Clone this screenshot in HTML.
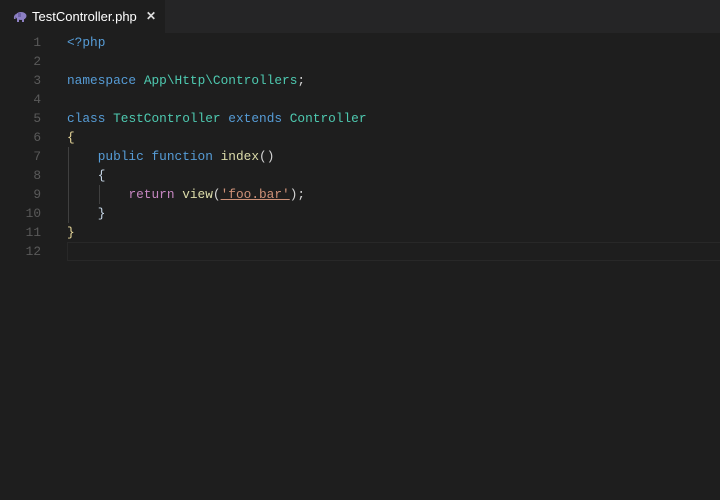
<!DOCTYPE html>
<html><head><meta charset="utf-8"><style>
html,body{margin:0;padding:0;width:720px;height:500px;background:#1e1e1e;overflow:hidden}
.tabbar{position:absolute;left:0;top:0;width:720px;height:33px;background:#252526}
.tab{position:absolute;left:0;top:0;width:165px;height:33px;background:#1e1e1e;font-family:"Liberation Sans",sans-serif;font-size:13px;color:#fff;letter-spacing:0}
.tab .name{position:absolute;left:32px;top:9px}
.tab .x{position:absolute;left:146px;top:9px;font-size:12px;font-weight:bold;color:#ddd}
.code{position:absolute;left:0;top:33px;font-family:"Liberation Mono",monospace;font-size:12.8px;}
.ln{position:absolute;left:0;width:41px;text-align:right;color:#5a5a5a;height:19px;line-height:19px}
.l{position:absolute;left:67px;white-space:pre;height:19px;line-height:19px;color:#d4d4d4}
.k{color:#569cd6}.c{color:#4ec9b0}.f{color:#dcdcaa}.s{color:#ce9178;text-decoration:underline}.r{color:#c586c0}.b{color:#e8d89a}.b2{color:#c8d8e8}
.guide{position:absolute;width:1px;background:#404040}
.cur{position:absolute;left:67px;top:242px;width:653px;height:17px;border:1px solid #282828;border-right:none}
</style></head><body>
<div class="tabbar"><div class="tab">
<svg style="position:absolute;left:13px;top:11px" width="14" height="11" viewBox="0 0 14 11"><ellipse cx="8" cy="5" rx="5.5" ry="4" fill="#8c7fc4"/><path d="M2.5 3 Q0.5 5 1 8 L2.5 8 L3 4Z" fill="#8c7fc4"/><rect x="4" y="7" width="2" height="4" fill="#8c7fc4"/><rect x="9" y="7" width="2" height="4" fill="#8c7fc4"/><rect x="5" y="2" width="3" height="4" fill="#6f63a8"/></svg>
<span class="name">TestController.php</span><span class="x">✕</span></div></div>
<div class="cur"></div>
<div class="guide" style="left:68px;top:147px;height:76px"></div>
<div class="guide" style="left:99px;top:185px;height:19px"></div>
<div class="code" style="top:33px">
<div class="ln" style="top:0">1</div><div class="l" style="top:0"><span class="k">&lt;?php</span></div>
<div class="ln" style="top:19px">2</div>
<div class="ln" style="top:38px">3</div><div class="l" style="top:38px"><span class="k">namespace</span> <span class="c">App\Http\Controllers</span>;</div>
<div class="ln" style="top:57px">4</div>
<div class="ln" style="top:76px">5</div><div class="l" style="top:76px"><span class="k">class</span> <span class="c">TestController</span> <span class="k">extends</span> <span class="c">Controller</span></div>
<div class="ln" style="top:95px">6</div><div class="l b" style="top:95px">{</div>
<div class="ln" style="top:114px">7</div><div class="l" style="top:114px">    <span class="k">public</span> <span class="k">function</span> <span class="f">index</span>()</div>
<div class="ln" style="top:133px">8</div><div class="l" style="top:133px">    <span class="b2">{</span></div>
<div class="ln" style="top:152px">9</div><div class="l" style="top:152px">        <span class="r">return</span> <span class="f">view</span>(<span class="s">'foo.bar'</span>);</div>
<div class="ln" style="top:171px">10</div><div class="l" style="top:171px">    <span class="b2">}</span></div>
<div class="ln" style="top:190px">11</div><div class="l b" style="top:190px">}</div>
<div class="ln" style="top:209px">12</div>
</div>
</body></html>
